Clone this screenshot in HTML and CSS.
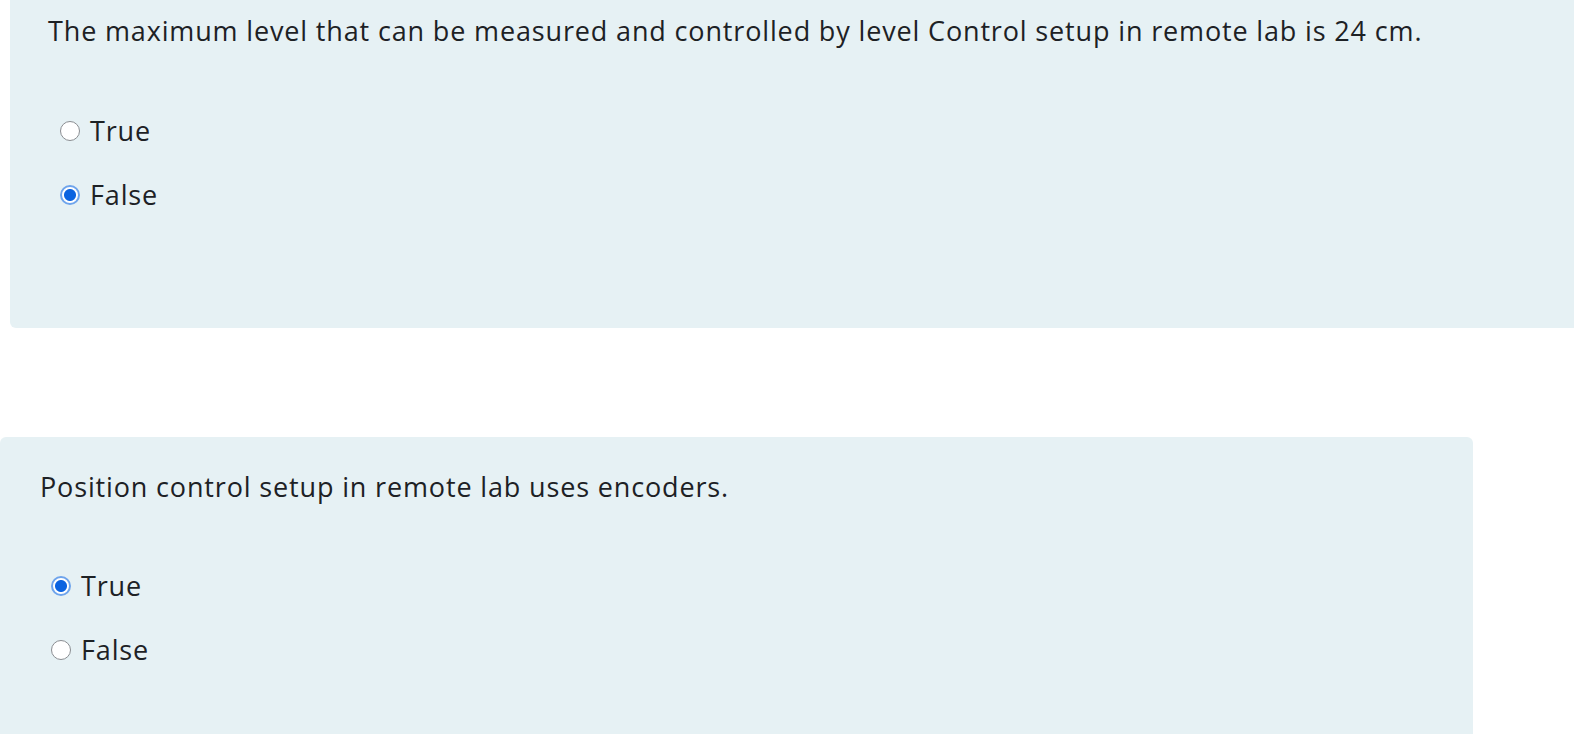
FILE: index.html
```html
<!DOCTYPE html>
<html lang="en">
<head>
<meta charset="utf-8">
<title>Quiz</title>
<link rel="stylesheet" href="styles.css">
</head>
<body>
<div class="page">
  <div class="card card-first">
    <div class="qtext">The maximum level that can be measured and controlled by level Control setup in remote lab is 24 cm.</div>
    <div class="answers">
      <label class="opt"><input type="radio" name="q1"><span>True</span></label>
      <label class="opt"><input type="radio" name="q1" checked><span>False</span></label>
    </div>
  </div>
  <div class="card card-second">
    <div class="qtext">Position control setup in remote lab uses encoders.</div>
    <div class="answers">
      <label class="opt"><input type="radio" name="q2" checked><span>True</span></label>
      <label class="opt"><input type="radio" name="q2"><span>False</span></label>
    </div>
  </div>
</div>
</body>
</html>
```
FILE: styles.css
```css
html, body {
  margin: 0;
  padding: 0;
  background: #ffffff;
  overflow: hidden;
}
.page {
  width: 1574px;
  height: 734px;
  overflow: hidden;
  font-family: "Open Sans", "Noto Sans", sans-serif;
  font-size: 27px;
  letter-spacing: 0.85px;
  line-height: 36px;
  color: #1d2125;
}
.card {
  background: #e6f1f4;
  border-radius: 6px;
  box-sizing: border-box;
}
.card-first {
  margin-left: 10px;
  width: 1600px;
  height: 328px;
  padding: 13px 0 0 38px;
  border-top-left-radius: 0;
  border-top-right-radius: 0;
}
.card-second {
  margin-top: 109px;
  margin-left: 0;
  width: 1473px;
  height: 320px;
  padding: 32px 0 0 40px;
}
.qtext {
  white-space: nowrap;
}
.answers {
  display: flex;
  flex-direction: column;
  gap: 28px;
  margin-top: 64px;
  padding-left: 12px;
}
.card-second .answers {
  padding-left: 11px;
  margin-top: 63px;
}
.opt {
  display: flex;
  align-items: center;
  gap: 10px;
  height: 36px;
}
.opt input {
  appearance: none;
  -webkit-appearance: none;
  margin: 0;
  width: 20px;
  height: 20px;
  border-radius: 50%;
  border: 1.5px solid #8a8d91;
  background: #ffffff;
  box-sizing: border-box;
  flex: none;
}
.opt input:checked {
  border: 2px solid #6ea4ec;
  background: radial-gradient(circle, #0b63e0 0 5.5px, #ffffff 6.5px 100%);
}
```
